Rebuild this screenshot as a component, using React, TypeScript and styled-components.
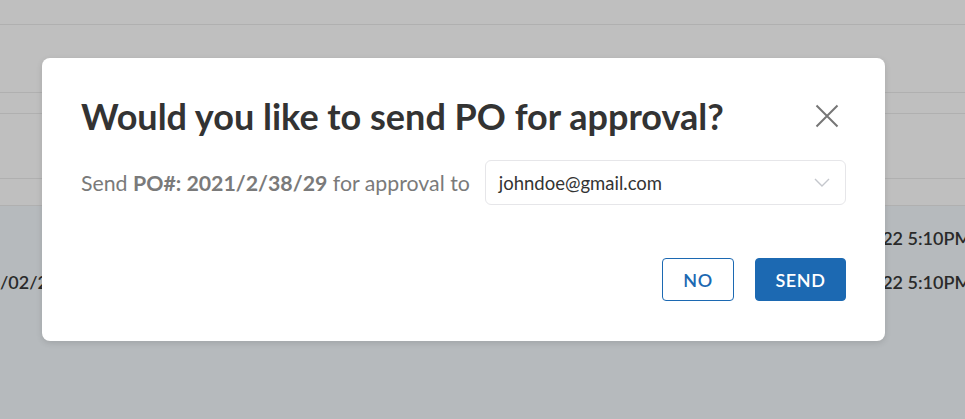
import React from "react";
import styled, { createGlobalStyle } from "styled-components";

const Global = createGlobalStyle`
  html, body { margin: 0; padding: 0; }
  body {
    width: 965px;
    height: 419px;
    overflow: hidden;
    font-family: Lato, "Open Sans", Arial, sans-serif;
    background: #ffffff;
  }
`;

const Page = styled.div`
  position: relative;
  width: 965px;
  height: 419px;
  overflow: hidden;
  display: flex;
  flex-direction: column;
  background: #ffffff;
`;

const Band = styled.div<{ $h: number }>`
  height: ${(p) => p.$h}px;
  flex: none;
  background: #ffffff;
  border-bottom: 1px solid #ebebeb;
`;

const Body = styled.div`
  flex: 1;
  background: #f3f8fc;
  display: flex;
  flex-direction: column;
  padding-top: 19px;
  gap: 19px;
`;

const DataRow = styled.div`
  height: 25px;
  display: flex;
  align-items: center;
  white-space: nowrap;
  font-size: 18px;
  font-weight: 600;
  color: #383838;
`;

const LeftCell = styled.div`
  width: 803px;
  flex: none;
  overflow: hidden;
`;

const RightCell = styled.div`
  flex: none;
`;

const Overlay = styled.div`
  position: absolute;
  inset: 0;
  background: rgba(0, 0, 0, 0.25);
`;

const Dialog = styled.div`
  position: absolute;
  left: 42px;
  top: 58px;
  width: 843px;
  height: 283px;
  box-sizing: border-box;
  background: #ffffff;
  border-radius: 8px;
  box-shadow: 0 2px 6px rgba(0, 0, 0, 0.12);
  padding: 36px 39px 0 39px;
  display: flex;
  flex-direction: column;
`;

const Header = styled.div`
  display: flex;
  align-items: center;
  justify-content: space-between;
`;

const Title = styled.h2`
  margin: 0;
  font-size: 36px;
  line-height: 44px;
  font-weight: 700;
  color: #333333;
  white-space: nowrap;
`;

const CloseButton = styled.button`
  width: 30px;
  height: 30px;
  padding: 0;
  border: none;
  background: transparent;
  display: flex;
  align-items: center;
  justify-content: center;
  margin-right: 4px;
  cursor: pointer;
`;

const Row = styled.div`
  margin-top: 22px;
  display: flex;
  align-items: center;
  gap: 15px;
`;

const Prompt = styled.span`
  font-size: 21.3px;
  color: #7a7a7a;
  white-space: nowrap;
  b { font-weight: 700; }
`;

const Select = styled.div`
  flex: 1;
  height: 45px;
  box-sizing: border-box;
  border: 1px solid #e6e6e9;
  border-radius: 6px;
  display: flex;
  align-items: center;
  justify-content: space-between;
  padding: 0 15px 0 13px;
  font-size: 18.5px;
  color: #333333;
`;

const Footer = styled.div`
  margin-top: 53px;
  display: flex;
  justify-content: flex-end;
  gap: 21px;
`;

const Button = styled.button<{ $primary?: boolean }>`
  height: 43px;
  box-sizing: border-box;
  padding: 0;
  width: ${(p) => (p.$primary ? 91 : 72)}px;
  border-radius: 4px;
  border: 1px solid #1c69b2;
  background: ${(p) => (p.$primary ? "#1c69b2" : "#ffffff")};
  color: ${(p) => (p.$primary ? "#ffffff" : "#1c69b2")};
  font-family: Lato, Arial, sans-serif;
  font-size: 18px;
  font-weight: 600;
  letter-spacing: 0.6px;
  cursor: pointer;
`;

export default function App() {
  return (
    <>
      <Global />
      <Page>
        <Band $h={24} />
        <Band $h={67} />
        <Band $h={20} />
        <Band $h={64} />
        <Band $h={26} />
        <Body>
          <DataRow>
            <LeftCell />
            <RightCell>02/02/2022 5:10PM</RightCell>
          </DataRow>
          <DataRow>
            <LeftCell>/02/2022</LeftCell>
            <RightCell>02/02/2022 5:10PM</RightCell>
          </DataRow>
        </Body>
        <Overlay />
        <Dialog role="dialog">
          <Header>
            <Title>Would you like to send PO for approval?</Title>
            <CloseButton aria-label="Close">
              <svg width="24" height="24" viewBox="0 0 24 24">
                <path
                  d="M1.5 1.5 L22.5 22.5 M22.5 1.5 L1.5 22.5"
                  stroke="#767676"
                  strokeWidth="2"
                  fill="none"
                />
              </svg>
            </CloseButton>
          </Header>
          <Row>
            <Prompt>
              Send <b>PO#: 2021/2/38/29</b> for approval to
            </Prompt>
            <Select>
              <span>johndoe@gmail.com</span>
              <svg width="16" height="9" viewBox="0 0 16 9">
                <path d="M1 1 L8 8 L15 1" stroke="#c4c7cc" strokeWidth="1.4" fill="none" />
              </svg>
            </Select>
          </Row>
          <Footer>
            <Button>NO</Button>
            <Button $primary>SEND</Button>
          </Footer>
        </Dialog>
      </Page>
    </>
  );
}
